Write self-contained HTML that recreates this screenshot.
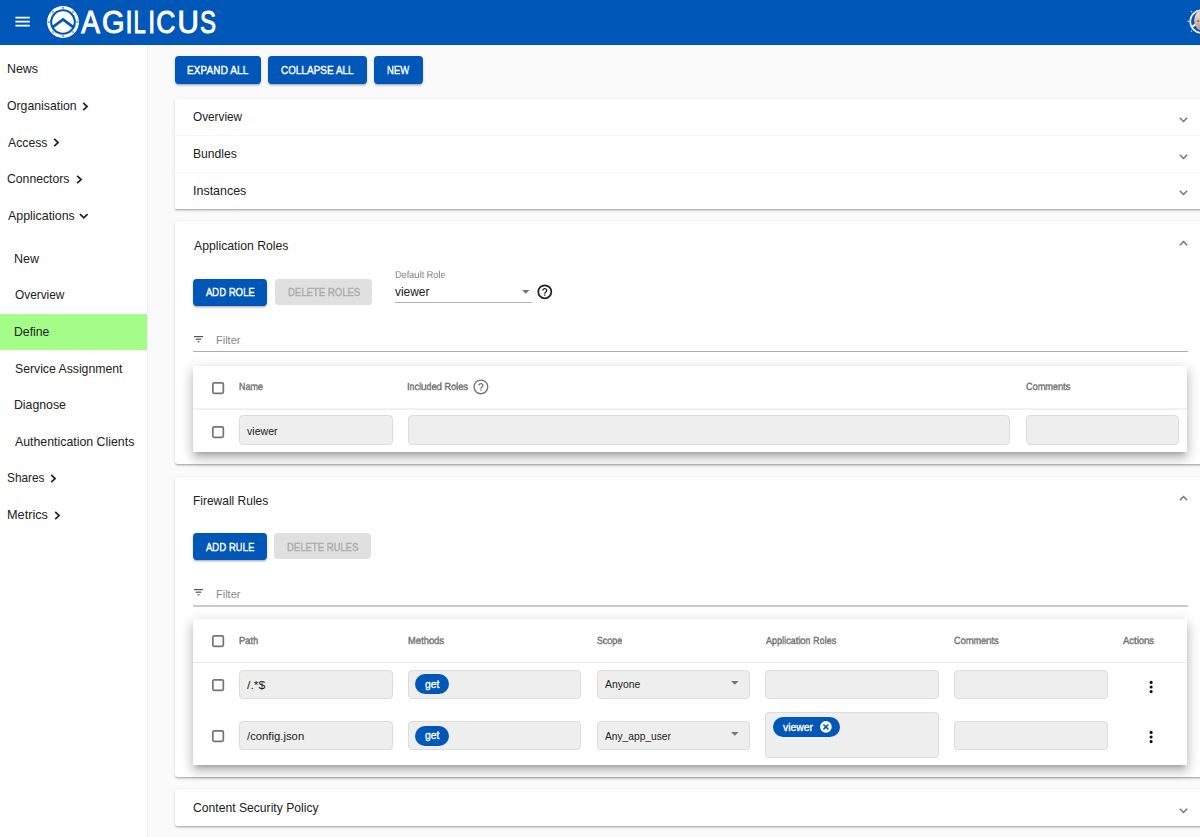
<!DOCTYPE html>
<html><head><meta charset="utf-8"><title>Agilicus</title>
<style>
html,body{margin:0;padding:0;}
body{width:1200px;height:837px;overflow:hidden;position:relative;background:#fafafa;font-family:"Liberation Sans",sans-serif;}
#hd{position:absolute;left:0;top:0;width:1200px;height:44.6px;background:#0057b8;}
#bx>div,#ic>svg,.t{position:absolute;}
#ic>svg{overflow:visible;}
.t{white-space:nowrap;line-height:20px;transform-origin:0 0;}
.g{will-change:transform;}
</style></head><body>
<div id="bx">
<div style="left:0px;top:45px;width:147px;height:792px;background:#fff;border-right:1px solid #ececec;"></div>
<div style="left:0px;top:314px;width:147px;height:36.4px;background:#a4fe89;"></div>
<div style="left:175px;top:99px;width:1040px;height:110px;background:#fff;border-radius:3px 3px 1.5px 1.5px;box-shadow:0 2.7px 1px -1.8px rgba(0,0,0,.15),0 1.8px 1.8px 0 rgba(0,0,0,.11),0 1px 4px 0 rgba(0,0,0,.09);"></div>
<div style="left:175px;top:135.2px;width:1040px;height:1px;background:#f5f5f5;"></div>
<div style="left:175px;top:172px;width:1040px;height:1px;background:#f5f5f5;"></div>
<div style="left:175px;top:221.4px;width:1040px;height:242.9px;background:#fff;border-radius:3px;box-shadow:0 2.7px 1px -1.8px rgba(0,0,0,.15),0 1.8px 1.8px 0 rgba(0,0,0,.11),0 1px 4px 0 rgba(0,0,0,.09);"></div>
<div style="left:175px;top:476.5px;width:1040px;height:300.9px;background:#fff;border-radius:3px;box-shadow:0 2.7px 1px -1.8px rgba(0,0,0,.15),0 1.8px 1.8px 0 rgba(0,0,0,.11),0 1px 4px 0 rgba(0,0,0,.09);"></div>
<div style="left:175px;top:789.4px;width:1040px;height:36.7px;background:#fff;border-radius:3px;box-shadow:0 2.7px 1px -1.8px rgba(0,0,0,.15),0 1.8px 1.8px 0 rgba(0,0,0,.11),0 1px 4px 0 rgba(0,0,0,.09);"></div>
<div style="left:175px;top:56.2px;width:86.2px;height:27.5px;background:#0057b8;border-radius:3.7px;box-shadow:0 2.7px 1px -1.8px rgba(0,0,0,.15),0 1.8px 1.8px 0 rgba(0,0,0,.11),0 1px 4px 0 rgba(0,0,0,.09);"></div>
<div style="left:268.2px;top:56.2px;width:98.5px;height:27.5px;background:#0057b8;border-radius:3.7px;box-shadow:0 2.7px 1px -1.8px rgba(0,0,0,.15),0 1.8px 1.8px 0 rgba(0,0,0,.11),0 1px 4px 0 rgba(0,0,0,.09);"></div>
<div style="left:374.2px;top:56.2px;width:48.8px;height:27.5px;background:#0057b8;border-radius:3.7px;box-shadow:0 2.7px 1px -1.8px rgba(0,0,0,.15),0 1.8px 1.8px 0 rgba(0,0,0,.11),0 1px 4px 0 rgba(0,0,0,.09);"></div>
<div style="left:193.1px;top:279px;width:74.2px;height:27.2px;background:#0057b8;border-radius:3.7px;box-shadow:0 2.7px 1px -1.8px rgba(0,0,0,.15),0 1.8px 1.8px 0 rgba(0,0,0,.11),0 1px 4px 0 rgba(0,0,0,.09);"></div>
<div style="left:275px;top:279px;width:96.7px;height:26px;background:#e0e0e0;border-radius:3.7px;"></div>
<div style="left:394.8px;top:302px;width:137.5px;height:1px;background:#b4b4b4;"></div>
<div style="left:193px;top:351px;width:995px;height:1px;background:#ababab;"></div>
<div style="left:193px;top:366px;width:994.2px;height:86px;background:#fff;box-shadow:0 4.6px 4.6px -2.7px rgba(0,0,0,.2),0 7.3px 9.2px 1px rgba(0,0,0,.14),0 2.7px 12.8px 1.8px rgba(0,0,0,.12);"></div>
<div style="left:193px;top:408px;width:994.2px;height:2px;background:#f1f1f1;"></div>
<div style="left:239.2px;top:415.2px;width:153.4px;height:29.8px;background:#eeeeee;border:1px solid #dcdcdc;border-radius:4px;box-sizing:border-box;"></div>
<div style="left:408px;top:415.2px;width:602.4px;height:29.8px;background:#eeeeee;border:1px solid #dcdcdc;border-radius:4px;box-sizing:border-box;"></div>
<div style="left:1026px;top:415.2px;width:153.2px;height:29.8px;background:#eeeeee;border:1px solid #dcdcdc;border-radius:4px;box-sizing:border-box;"></div>
<div style="left:193.1px;top:533px;width:73.6px;height:26.8px;background:#0057b8;border-radius:3.7px;box-shadow:0 2.7px 1px -1.8px rgba(0,0,0,.15),0 1.8px 1.8px 0 rgba(0,0,0,.11),0 1px 4px 0 rgba(0,0,0,.09);"></div>
<div style="left:274.2px;top:533.2px;width:96.7px;height:26.2px;background:#e0e0e0;border-radius:3.7px;"></div>
<div style="left:193px;top:605px;width:995px;height:2px;background:#cbcbcb;"></div>
<div style="left:193px;top:619.3px;width:994px;height:145.7px;background:#fff;box-shadow:0 4.6px 4.6px -2.7px rgba(0,0,0,.2),0 7.3px 9.2px 1px rgba(0,0,0,.14),0 2.7px 12.8px 1.8px rgba(0,0,0,.12);"></div>
<div style="left:193px;top:662px;width:994px;height:1px;background:#e8e8e8;"></div>
<div style="left:239.1px;top:670px;width:153.6px;height:28.6px;background:#eeeeee;border:1px solid #dcdcdc;border-radius:4px;box-sizing:border-box;"></div>
<div style="left:408.2px;top:670px;width:172.9px;height:28.6px;background:#eeeeee;border:1px solid #dcdcdc;border-radius:4px;box-sizing:border-box;"></div>
<div style="left:596.5px;top:670px;width:153.1px;height:28.6px;background:#eeeeee;border:1px solid #dcdcdc;border-radius:4px;box-sizing:border-box;"></div>
<div style="left:954px;top:670px;width:153.7px;height:28.6px;background:#eeeeee;border:1px solid #dcdcdc;border-radius:4px;box-sizing:border-box;"></div>
<div style="left:239.1px;top:721px;width:153.6px;height:28.6px;background:#eeeeee;border:1px solid #dcdcdc;border-radius:4px;box-sizing:border-box;"></div>
<div style="left:408.2px;top:721px;width:172.9px;height:28.6px;background:#eeeeee;border:1px solid #dcdcdc;border-radius:4px;box-sizing:border-box;"></div>
<div style="left:596.5px;top:721px;width:153.1px;height:28.6px;background:#eeeeee;border:1px solid #dcdcdc;border-radius:4px;box-sizing:border-box;"></div>
<div style="left:954px;top:721px;width:153.7px;height:28.6px;background:#eeeeee;border:1px solid #dcdcdc;border-radius:4px;box-sizing:border-box;"></div>
<div style="left:765.2px;top:670px;width:173.5px;height:28.6px;background:#eeeeee;border:1px solid #dcdcdc;border-radius:4px;box-sizing:border-box;"></div>
<div style="left:765.2px;top:712.3px;width:173.5px;height:45.7px;background:#eeeeee;border:1px solid #dcdcdc;border-radius:4px;box-sizing:border-box;"></div>
<div style="left:415.2px;top:674.2px;width:34.1px;height:20px;background:#0057b8;border-radius:10px;"></div>
<div style="left:415.2px;top:725.5px;width:34.1px;height:20px;background:#0057b8;border-radius:10px;"></div>
<div style="left:773px;top:716.9px;width:66.6px;height:20px;background:#0057b8;border-radius:10px;"></div>
</div>
<div id="hd"></div>
<div id="ic">
<svg style="left:211.7px;top:381.9px" width="12.2" height="12.2" viewBox="0 0 12.2 12.2"><rect x="0.85" y="0.85" width="10.5" height="10.5" rx="1.3" fill="none" stroke="#757575" stroke-width="1.7"/></svg>
<svg style="left:211.7px;top:425.7px" width="12.2" height="12.2" viewBox="0 0 12.2 12.2"><rect x="0.85" y="0.85" width="10.5" height="10.5" rx="1.3" fill="none" stroke="#757575" stroke-width="1.7"/></svg>
<svg style="left:211.6px;top:635.4px" width="12.2" height="12.2" viewBox="0 0 12.2 12.2"><rect x="0.85" y="0.85" width="10.5" height="10.5" rx="1.3" fill="none" stroke="#757575" stroke-width="1.7"/></svg>
<svg style="left:211.6px;top:678.9px" width="12.2" height="12.2" viewBox="0 0 12.2 12.2"><rect x="0.85" y="0.85" width="10.5" height="10.5" rx="1.3" fill="none" stroke="#757575" stroke-width="1.7"/></svg>
<svg style="left:211.6px;top:730.2px" width="12.2" height="12.2" viewBox="0 0 12.2 12.2"><rect x="0.85" y="0.85" width="10.5" height="10.5" rx="1.3" fill="none" stroke="#757575" stroke-width="1.7"/></svg>
<svg style="left:12.6px;top:12.1px" width="19.2" height="19.2" viewBox="0 0 24 24"><path fill="#fff" d="M3 18h18v-2H3v2zm0-5h18v-2H3v2zm0-7v2h18V6H3z"/></svg>
<svg style="left:46.8px;top:5.8px" width="32" height="32" viewBox="0 0 32 32"><circle cx="16" cy="16" r="15.9" fill="#fff"/>
<circle cx="16" cy="16" r="11.8" fill="none" stroke="#0057b8" stroke-width="2.1"/>
<path d="M5.4 21.4 L16 13.4 L26.6 21.4" fill="none" stroke="#0057b8" stroke-width="2.7"/>
<g fill="#0057b8"><circle cx="16" cy="1.9" r=".8"/><circle cx="16" cy="30.1" r=".8"/><circle cx="1.9" cy="16" r=".8"/><circle cx="30.1" cy="16" r=".8"/><circle cx="6" cy="6" r=".8"/><circle cx="26" cy="6" r=".8"/><circle cx="6" cy="26" r=".8"/><circle cx="26" cy="26" r=".8"/></g></svg>
<svg style="left:82.1px;top:102px" width="6.6" height="9.2" viewBox="0 0 6.6 9.2"><path d="M1.2 1 L5.1 4.6 L1.2 8.2" fill="none" stroke="#212121" stroke-width="1.7"/></svg>
<svg style="left:52.6px;top:138.4px" width="6.6" height="9.2" viewBox="0 0 6.6 9.2"><path d="M1.2 1 L5.1 4.6 L1.2 8.2" fill="none" stroke="#212121" stroke-width="1.7"/></svg>
<svg style="left:75.6px;top:174.8px" width="6.6" height="9.2" viewBox="0 0 6.6 9.2"><path d="M1.2 1 L5.1 4.6 L1.2 8.2" fill="none" stroke="#212121" stroke-width="1.7"/></svg>
<svg style="left:50.4px;top:474.3px" width="6.6" height="9.2" viewBox="0 0 6.6 9.2"><path d="M1.2 1 L5.1 4.6 L1.2 8.2" fill="none" stroke="#212121" stroke-width="1.7"/></svg>
<svg style="left:54.1px;top:510.8px" width="6.6" height="9.2" viewBox="0 0 6.6 9.2"><path d="M1.2 1 L5.1 4.6 L1.2 8.2" fill="none" stroke="#212121" stroke-width="1.7"/></svg>
<svg style="left:79px;top:213px" width="9.6" height="6.4" viewBox="0 0 9.6 6.4"><path d="M1 1.1 L4.8 4.9 L8.6 1.1" fill="none" stroke="#212121" stroke-width="1.7"/></svg>
<svg style="left:1179.1px;top:117px" width="9" height="6" viewBox="0 0 9 6"><path d="M0.8 0.8 L4.5 4.5 L8.2 0.8" fill="none" stroke="#757575" stroke-width="1.5"/></svg>
<svg style="left:1179.1px;top:153.6px" width="9" height="6" viewBox="0 0 9 6"><path d="M0.8 0.8 L4.5 4.5 L8.2 0.8" fill="none" stroke="#757575" stroke-width="1.5"/></svg>
<svg style="left:1179.1px;top:190.2px" width="9" height="6" viewBox="0 0 9 6"><path d="M0.8 0.8 L4.5 4.5 L8.2 0.8" fill="none" stroke="#757575" stroke-width="1.5"/></svg>
<svg style="left:1179.1px;top:807.5px" width="9" height="6" viewBox="0 0 9 6"><path d="M0.8 0.8 L4.5 4.5 L8.2 0.8" fill="none" stroke="#757575" stroke-width="1.5"/></svg>
<svg style="left:1179.1px;top:240.0px" width="9" height="6" viewBox="0 0 9 6"><path d="M0.8 5.2 L4.5 1.5 L8.2 5.2" fill="none" stroke="#757575" stroke-width="1.5"/></svg>
<svg style="left:1179.1px;top:495.0px" width="9" height="6" viewBox="0 0 9 6"><path d="M0.8 5.2 L4.5 1.5 L8.2 5.2" fill="none" stroke="#757575" stroke-width="1.5"/></svg>
<svg style="left:194.2px;top:335.7px" width="9" height="7" viewBox="0 0 9 7"><g fill="#555"><rect x="0" y="0" width="9" height="1.2"/><rect x="1.7" y="2.6" width="5.6" height="1.2"/><rect x="3.6" y="5.2" width="1.8" height="1.2"/></g></svg>
<svg style="left:194.2px;top:589.2px" width="9" height="7" viewBox="0 0 9 7"><g fill="#555"><rect x="0" y="0" width="9" height="1.2"/><rect x="1.7" y="2.6" width="5.6" height="1.2"/><rect x="3.6" y="5.2" width="1.8" height="1.2"/></g></svg>
<svg style="left:521.8px;top:290.2px" width="7.6" height="3.8" viewBox="0 0 7.6 3.8"><path d="M0 0 L7.6 0 L3.8 3.8z" fill="#757575"/></svg>
<svg style="left:731px;top:681px" width="7.6" height="3.8" viewBox="0 0 7.6 3.8"><path d="M0 0 L7.6 0 L3.8 3.8z" fill="#757575"/></svg>
<svg style="left:731px;top:732px" width="7.6" height="3.8" viewBox="0 0 7.6 3.8"><path d="M0 0 L7.6 0 L3.8 3.8z" fill="#757575"/></svg>
<svg style="left:537.2px;top:283.7px" width="15.6" height="15.6" viewBox="0 0 24 24"><circle cx="12" cy="12" r="10.05" fill="none" stroke="#212121" stroke-width="2.7"/><path fill="#212121" d="M11 18h2v-2h-2v2zm1-12c-2.21 0-4 1.79-4 4h2c0-1.1.9-2 2-2s2 .9 2 2c0 2-3 1.75-3 5h2c0-2.25 3-2.5 3-5 0-2.21-1.79-4-4-4z"/></svg>
<svg style="left:473px;top:379.3px" width="15.8" height="15.8" viewBox="0 0 24 24"><circle cx="12" cy="12" r="10.4" fill="none" stroke="#757575" stroke-width="2.0"/><path fill="#757575" d="M11 18h2v-2h-2v2zm1-12c-2.21 0-4 1.79-4 4h2c0-1.1.9-2 2-2s2 .9 2 2c0 2-3 1.75-3 5h2c0-2.25 3-2.5 3-5 0-2.21-1.79-4-4-4z"/></svg>
<svg style="left:1148.7px;top:679.5px" width="4" height="14" viewBox="0 0 4 14"><g fill="#111"><circle cx="2.1" cy="2.4" r="1.55"/><circle cx="2.1" cy="7" r="1.55"/><circle cx="2.1" cy="11.6" r="1.55"/></g></svg>
<svg style="left:1148.7px;top:730.4px" width="4" height="14" viewBox="0 0 4 14"><g fill="#111"><circle cx="2.1" cy="2.4" r="1.55"/><circle cx="2.1" cy="7" r="1.55"/><circle cx="2.1" cy="11.6" r="1.55"/></g></svg>
<svg style="left:820.4px;top:721px" width="11.8" height="11.8" viewBox="0 0 12 12"><circle cx="6" cy="6" r="5.9" fill="#fff"/><path d="M3.5 3.5 L8.5 8.5 M8.5 3.5 L3.5 8.5" stroke="#0057b8" stroke-width="1.6"/></svg>
<svg style="left:1180px;top:5px" width="30" height="34" viewBox="0 0 30 34"><defs><clipPath id="avc"><circle cx="21.7" cy="16.5" r="10.7"/></clipPath><linearGradient id="avg" x1="0" y1="0" x2="0.4" y2="1"><stop offset="0" stop-color="#f3e6e6"/><stop offset="0.45" stop-color="#e3c4c0"/><stop offset="1" stop-color="#b98d80"/></linearGradient></defs>
<circle cx="21.7" cy="16.5" r="11.4" fill="#0057b8" stroke="#fff" stroke-width="1.6"/>
<g clip-path="url(#avc)"><path d="M11.2 22.2 L16.2 19.2" stroke="#fff" stroke-width="2"/><ellipse cx="22.2" cy="15.4" rx="8" ry="10.3" fill="url(#avg)"/><ellipse cx="18" cy="16.1" rx="1.5" ry="0.8" fill="#6b4a45" opacity=".8"/></g>
<g stroke="#d5e3f6" stroke-width="1.1"><path d="M7.6 16.4h1.8M11 6.2l1 .9M11 26.6l1 -.9"/></g></svg>
<svg style="left:0;top:0" width="230" height="45" viewBox="0 0 230 45"><text transform="translate(81.20,33.3) scale(0.8947,1)" font-family="Liberation Sans" font-size="31.2" fill="#fff" stroke="#fff" stroke-width="1.0">A</text><text transform="translate(102.00,33.3) scale(0.9313,1)" font-family="Liberation Sans" font-size="31.2" fill="#fff" stroke="#fff" stroke-width="1.0">G</text><text transform="translate(125.42,33.3) scale(0.8159,1)" font-family="Liberation Sans" font-size="31.2" fill="#fff" stroke="#fff" stroke-width="1.0">I</text><text transform="translate(133.39,33.3) scale(0.7036,1)" font-family="Liberation Sans" font-size="31.2" fill="#fff" stroke="#fff" stroke-width="1.0">L</text><text transform="translate(148.21,33.3) scale(0.7932,1)" font-family="Liberation Sans" font-size="31.2" fill="#fff" stroke="#fff" stroke-width="1.0">I</text><text transform="translate(156.19,33.3) scale(0.8457,1)" font-family="Liberation Sans" font-size="31.2" fill="#fff" stroke="#fff" stroke-width="1.0">C</text><text transform="translate(177.38,33.3) scale(0.9475,1)" font-family="Liberation Sans" font-size="31.2" fill="#fff" stroke="#fff" stroke-width="1.0">U</text><text transform="translate(200.04,33.3) scale(0.7682,1)" font-family="Liberation Sans" font-size="31.2" fill="#fff" stroke="#fff" stroke-width="1.0">S</text></svg>
</div>
<div id="tx">
<span class="t" style="left:6.87px;top:59px;font-size:13px;font-weight:400;color:#212121;transform:scaleX(0.9550);">News</span>
<span class="t" style="left:7.12px;top:96px;font-size:13px;font-weight:400;color:#212121;transform:scaleX(0.9432);">Organisation</span>
<span class="t" style="left:7.61px;top:133px;font-size:13px;font-weight:400;color:#212121;transform:scaleX(0.9409);">Access</span>
<span class="t" style="left:6.76px;top:169px;font-size:13px;font-weight:400;color:#212121;transform:scaleX(0.9386);">Connectors</span>
<span class="t" style="left:7.61px;top:206px;font-size:13px;font-weight:400;color:#212121;transform:scaleX(0.9530);">Applications</span>
<span class="t" style="left:13.78px;top:249px;font-size:13px;font-weight:400;color:#212121;transform:scaleX(0.9643);">New</span>
<span class="t" style="left:14.98px;top:285px;font-size:13px;font-weight:400;color:#212121;transform:scaleX(0.9109);">Overview</span>
<span class="t" style="left:13.80px;top:322px;font-size:13px;font-weight:400;color:#212121;transform:scaleX(0.9424);">Define</span>
<span class="t" style="left:14.74px;top:359px;font-size:13px;font-weight:400;color:#212121;transform:scaleX(0.9410);">Service Assignment</span>
<span class="t" style="left:13.80px;top:395px;font-size:13px;font-weight:400;color:#212121;transform:scaleX(0.9452);">Diagnose</span>
<span class="t" style="left:15.04px;top:432px;font-size:13px;font-weight:400;color:#212121;transform:scaleX(0.9488);">Authentication Clients</span>
<span class="t" style="left:6.69px;top:468px;font-size:13px;font-weight:400;color:#212121;transform:scaleX(0.9091);">Shares</span>
<span class="t" style="left:6.77px;top:505px;font-size:13px;font-weight:400;color:#212121;transform:scaleX(0.9780);">Metrics</span>
<span class="t" style="left:192.69px;top:107px;font-size:13px;font-weight:400;color:#212121;transform:scaleX(0.9056);">Overview</span>
<span class="t" style="left:192.95px;top:144px;font-size:13px;font-weight:400;color:#212121;transform:scaleX(0.9341);">Bundles</span>
<span class="t" style="left:192.58px;top:181px;font-size:13px;font-weight:400;color:#212121;transform:scaleX(0.9588);">Instances</span>
<span class="t" style="left:193.59px;top:236px;font-size:13px;font-weight:400;color:#212121;transform:scaleX(0.9394);">Application Roles</span>
<span class="t" style="left:192.63px;top:491px;font-size:13px;font-weight:400;color:#212121;transform:scaleX(0.9210);">Firewall Rules</span>
<span class="t" style="left:193.03px;top:798px;font-size:13px;font-weight:400;color:#212121;transform:scaleX(0.9345);">Content Security Policy</span>
<span class="t" style="left:394.80px;top:282px;font-size:13.2px;font-weight:400;color:#212121;transform:scaleX(0.9042);">viewer</span>
<span class="t" style="left:215.62px;top:330px;font-size:11.7px;font-weight:400;color:#888;transform:scaleX(0.9392);">Filter</span>
<span class="t" style="left:246.70px;top:421px;font-size:11.5px;font-weight:400;color:#212121;transform:scaleX(0.9218);">viewer</span>
<span class="t" style="left:215.62px;top:584px;font-size:11.7px;font-weight:400;color:#888;transform:scaleX(0.9392);">Filter</span>
<span class="t" style="left:247.09px;top:675px;font-size:11.5px;font-weight:400;color:#212121;transform:scaleX(1.0612);">/.*$</span>
<span class="t" style="left:247.26px;top:726px;font-size:11.5px;font-weight:400;color:#212121;transform:scaleX(0.9831);">/config.json</span>
<span class="t" style="left:604.65px;top:674px;font-size:11.5px;font-weight:400;color:#212121;transform:scaleX(0.9067);">Anyone</span>
<span class="t" style="left:604.92px;top:726px;font-size:11.5px;font-weight:400;color:#212121;transform:scaleX(0.8886);">Any_app_user</span>
<span class="t" style="left:425.42px;top:674px;font-size:11px;font-weight:400;color:#fff;transform:scaleX(0.9420);-webkit-text-stroke:0.35px #fff;">get</span>
<span class="t" style="left:425.42px;top:725px;font-size:11px;font-weight:400;color:#fff;transform:scaleX(0.9420);-webkit-text-stroke:0.35px #fff;">get</span>
<span class="t" style="left:782.65px;top:717px;font-size:11px;font-weight:400;color:#fff;transform:scaleX(0.9447);-webkit-text-stroke:0.35px #fff;">viewer</span>
<span class="t g" style="left:186.70px;top:60px;font-size:11.7px;font-weight:400;color:#fff;transform:scaleX(0.8710);-webkit-text-stroke:0.5px #fff;">EXPAND ALL</span>
<span class="t g" style="left:281.06px;top:60px;font-size:11.7px;font-weight:400;color:#fff;transform:scaleX(0.8548);-webkit-text-stroke:0.5px #fff;">COLLAPSE ALL</span>
<span class="t g" style="left:387.31px;top:60px;font-size:11.7px;font-weight:400;color:#fff;transform:scaleX(0.8196);-webkit-text-stroke:0.5px #fff;">NEW</span>
<span class="t g" style="left:206.05px;top:282px;font-size:11.7px;font-weight:400;color:#fff;transform:scaleX(0.8177);-webkit-text-stroke:0.5px #fff;">ADD ROLE</span>
<span class="t g" style="left:287.58px;top:282px;font-size:11.7px;font-weight:400;color:#ababab;transform:scaleX(0.8188);-webkit-text-stroke:0.5px #ababab;">DELETE ROLES</span>
<span class="t g" style="left:394.56px;top:266px;font-size:10px;font-weight:400;color:#7a7a7a;transform:scaleX(0.9169);text-rendering:geometricPrecision;">Default Role</span>
<span class="t g" style="left:239.17px;top:378px;font-size:10.3px;font-weight:400;color:#6f6f6f;transform:scaleX(0.8738);-webkit-text-stroke:0.42px #6f6f6f;text-rendering:geometricPrecision;">Name</span>
<span class="t g" style="left:406.85px;top:378px;font-size:10.3px;font-weight:400;color:#6f6f6f;transform:scaleX(0.8962);-webkit-text-stroke:0.42px #6f6f6f;text-rendering:geometricPrecision;">Included Roles</span>
<span class="t g" style="left:1026.23px;top:378px;font-size:10.3px;font-weight:400;color:#6f6f6f;transform:scaleX(0.8899);-webkit-text-stroke:0.42px #6f6f6f;text-rendering:geometricPrecision;">Comments</span>
<span class="t g" style="left:205.98px;top:537px;font-size:11.7px;font-weight:400;color:#fff;transform:scaleX(0.8203);-webkit-text-stroke:0.5px #fff;">ADD RULE</span>
<span class="t g" style="left:287.29px;top:537px;font-size:11.7px;font-weight:400;color:#ababab;transform:scaleX(0.8146);-webkit-text-stroke:0.5px #ababab;">DELETE RULES</span>
<span class="t g" style="left:238.86px;top:632px;font-size:10.3px;font-weight:400;color:#6f6f6f;transform:scaleX(0.9103);-webkit-text-stroke:0.42px #6f6f6f;text-rendering:geometricPrecision;">Path</span>
<span class="t g" style="left:407.62px;top:632px;font-size:10.3px;font-weight:400;color:#6f6f6f;transform:scaleX(0.9158);-webkit-text-stroke:0.42px #6f6f6f;text-rendering:geometricPrecision;">Methods</span>
<span class="t g" style="left:596.61px;top:632px;font-size:10.3px;font-weight:400;color:#6f6f6f;transform:scaleX(0.8642);-webkit-text-stroke:0.42px #6f6f6f;text-rendering:geometricPrecision;">Scope</span>
<span class="t g" style="left:766.00px;top:632px;font-size:10.3px;font-weight:400;color:#6f6f6f;transform:scaleX(0.8827);-webkit-text-stroke:0.42px #6f6f6f;text-rendering:geometricPrecision;">Application Roles</span>
<span class="t g" style="left:954.41px;top:632px;font-size:10.3px;font-weight:400;color:#6f6f6f;transform:scaleX(0.8953);-webkit-text-stroke:0.42px #6f6f6f;text-rendering:geometricPrecision;">Comments</span>
<span class="t g" style="left:1122.89px;top:632px;font-size:10.3px;font-weight:400;color:#6f6f6f;transform:scaleX(0.9215);-webkit-text-stroke:0.42px #6f6f6f;text-rendering:geometricPrecision;">Actions</span>
</div>
</body></html>
